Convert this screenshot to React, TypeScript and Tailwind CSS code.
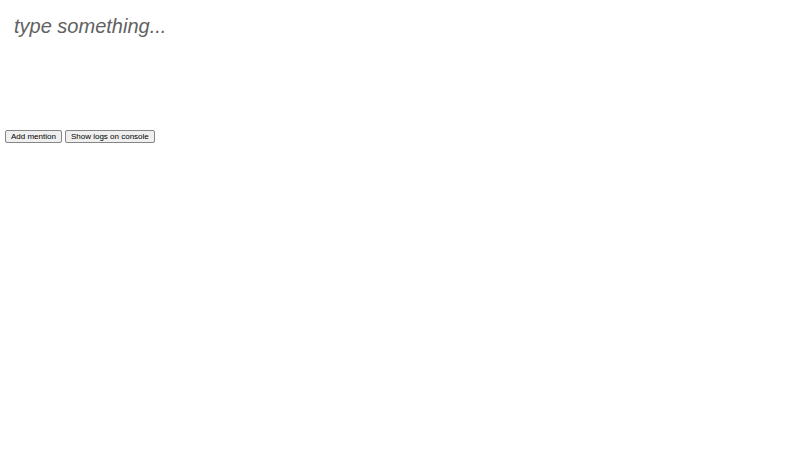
import { useState } from "react";

export default function App() {
  const [text, setText] = useState("");

  const addMention = () => setText((current) => current + "@");
  const showLogs = () => console.log(text);

  const buttonClass =
    "h-[13px] rounded-[2px] border border-[#858585] bg-[#efefef] px-[5px] text-[8px] leading-none text-black";

  return (
    <main className="bg-white p-[5px] font-['Liberation_Sans',Arial,sans-serif]">
      <textarea
        aria-label="Message"
        placeholder="type something..."
        value={text}
        onChange={(event) => setText(event.target.value)}
        className="block h-[125px] w-full resize-none bg-transparent px-[9px] py-2 text-[20px] leading-[27px] text-black outline-none placeholder:text-[#616161] placeholder:italic"
      />
      <div className="flex gap-[3px]">
        <button type="button" onClick={addMention} className={buttonClass}>
          Add mention
        </button>
        <button type="button" onClick={showLogs} className={buttonClass}>
          Show logs on console
        </button>
      </div>
    </main>
  );
}
